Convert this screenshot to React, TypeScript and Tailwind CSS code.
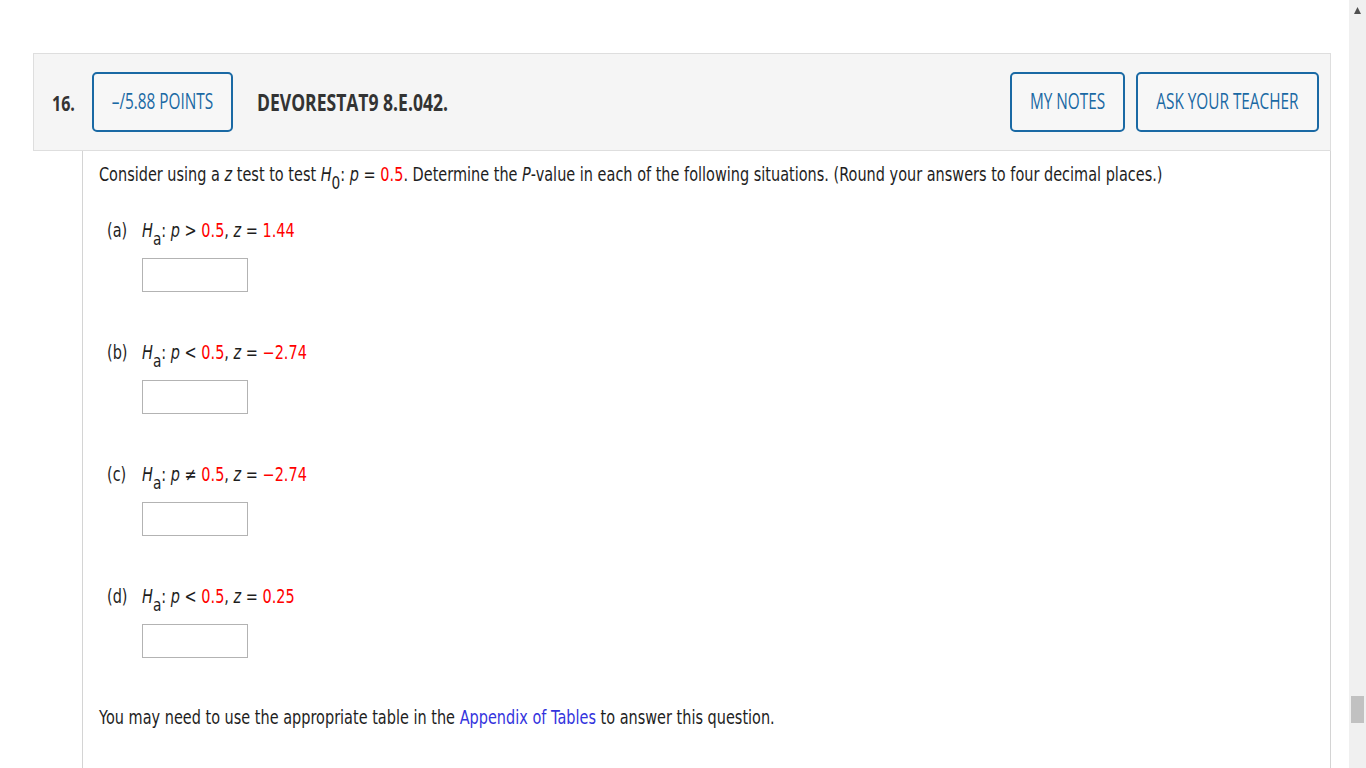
import React from "react";

const body = "font-['DejaVu_Sans',Verdana,sans-serif]";
const head = "font-['Open_Sans',sans-serif]";

function Sq({ children, origin = "left" }: { children: React.ReactNode; origin?: "left" | "center" }) {
  return (
    <span
      className={
        "inline-block shrink-0 whitespace-nowrap scale-x-[0.73] " +
        (origin === "left" ? "origin-left" : "origin-center")
      }
    >
      {children}
    </span>
  );
}

function SqB({ children }: { children: React.ReactNode }) {
  return (
    <span className="inline-block shrink-0 origin-left scale-x-[0.762] whitespace-nowrap">{children}</span>
  );
}

function HeadButton({ w, children }: { w: string; children: React.ReactNode }) {
  return (
    <div
      className={
        "flex h-[60px] shrink-0 items-center justify-center overflow-visible rounded-[5px] border-2 border-[#1a69a4] bg-[#f7f7f7] text-[21px] text-[#1a69a4] " +
        w
      }
    >
      <Sq origin="center">{children}</Sq>
    </div>
  );
}

const Red = ({ children }: { children: React.ReactNode }) => (
  <span className="text-[#ff0000]">{children}</span>
);

function Sub({ children }: { children: React.ReactNode }) {
  return <span className="relative top-[8px] text-[18px]">{children}</span>;
}

function Item({ label, rel, z }: { label: string; rel: string; z: string }) {
  return (
    <div>
      <div className="ml-[8px] flex h-[24px] items-center text-[19px] leading-[24px]">
        <div className="w-[35px] shrink-0">
          <SqB>{label}</SqB>
        </div>
        <div>
          <SqB>
            <i>H</i>
            <Sub>a</Sub>: <i>p</i> {rel} <Red>0.5</Red>, <i>z</i> = <Red>{z}</Red>
          </SqB>
        </div>
      </div>
      <div className="ml-[43px] mt-[16px] h-[34px] w-[106px] border border-[#b3b3b3] bg-white" />
    </div>
  );
}

export default function App() {
  return (
    <div className="flex h-screen w-full overflow-hidden bg-white text-[#1e1e1e]">
      <div className="min-w-0 flex-1 pl-[33px] pr-[18px] pt-[53px]">
        <div
          className={
            "flex h-[98px] items-center border border-[#dedede] bg-[#f5f5f5] pl-[18px] pr-[11px] " + head
          }
        >
          <div className="w-[40px] shrink-0 text-[22px] font-bold text-[#333]">
            <Sq>16.</Sq>
          </div>
          <HeadButton w="w-[141px]">–/5.88 POINTS</HeadButton>
          <div className="ml-[24px] text-[24px] font-bold text-[#333]">
            <Sq>DEVORESTAT9 8.E.042.</Sq>
          </div>
          <div className="ml-auto flex gap-[11px]">
            <HeadButton w="w-[115px]">MY NOTES</HeadButton>
            <HeadButton w="w-[183px]">ASK YOUR TEACHER</HeadButton>
          </div>
        </div>
        <div className={"ml-[49px] h-[700px] border-l border-r border-[#d4d4d4] pl-[16px] " + body}>
          <div className="pt-[11px] text-[19px] leading-[24px]">
            <SqB>
              Consider using a <i>z</i> test to test <i>H</i>
              <Sub>0</Sub>: <i>p</i> = <Red>0.5</Red>. Determine the <i>P</i>-value in each of the
              following situations. (Round your answers to four decimal places.)
            </SqB>
          </div>
          <div className="mt-[31px] flex flex-col gap-[48px]">
            <Item label="(a)" rel=">" z="1.44" />
            <Item label="(b)" rel="<" z="−2.74" />
            <Item label="(c)" rel="≠" z="−2.74" />
            <Item label="(d)" rel="<" z="0.25" />
          </div>
          <div className="mt-[47px] text-[19px] leading-[24px]">
            <SqB>
              You may need to use the appropriate table in the{" "}
              <span className="text-[#3333dd]">Appendix of Tables</span> to answer this question.
            </SqB>
          </div>
        </div>
      </div>
      <div className="flex w-[17px] shrink-0 flex-col items-center bg-[#f0f0f0]">
        <svg width="17" height="17" viewBox="0 0 17 17" className="block">
          <path d="M5 14 L8.5 7 L12 14 Z" fill="#505050" />
        </svg>
        <div className="mt-[679px] h-[27px] w-[13px] bg-[#c1c1c1]" />
      </div>
    </div>
  );
}
